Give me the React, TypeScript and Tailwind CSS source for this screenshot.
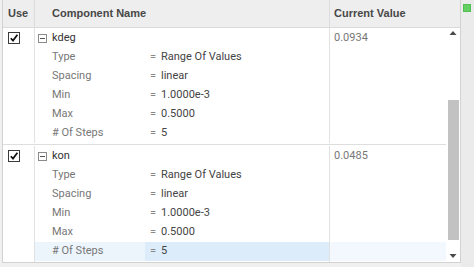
import React from 'react';

interface Param {
  label: string;
  value: string;
}

interface Component {
  id: string;
  name: string;
  current: string;
  params: Param[];
}

const COMPONENTS: Component[] = [
  {
    id: 'kdeg',
    name: 'kdeg',
    current: '0.0934',
    params: [
      { label: 'Type', value: 'Range Of Values' },
      { label: 'Spacing', value: 'linear' },
      { label: 'Min', value: '1.0000e-3' },
      { label: 'Max', value: '0.5000' },
      { label: '# Of Steps', value: '5' },
    ],
  },
  {
    id: 'kon',
    name: 'kon',
    current: '0.0485',
    params: [
      { label: 'Type', value: 'Range Of Values' },
      { label: 'Spacing', value: 'linear' },
      { label: 'Min', value: '1.0000e-3' },
      { label: 'Max', value: '0.5000' },
      { label: '# Of Steps', value: '5' },
    ],
  },
];

function CheckBox() {
  return (
    <span className="w-[12px] h-[12px] border border-[#3a3a3a] bg-white flex items-center justify-center">
      <svg width="10" height="10" viewBox="0 0 10 10">
        <path d="M1.8 5.2 L4 7.6 L8.4 1.8" fill="none" stroke="#111" strokeWidth="1.7" />
      </svg>
    </span>
  );
}

function CollapseIcon() {
  return (
    <span className="w-[9px] h-[9px] border border-[#8a8a8a] bg-white flex items-center justify-center">
      <span className="w-[5px] h-px bg-[#555]" />
    </span>
  );
}

export default function App() {
  return (
    <div className="w-[474px] h-[267px] bg-[#f0f0f0] flex overflow-hidden font-['Roboto',sans-serif] text-[11px]">
      <div className="w-[459px] h-[263px] ml-[2px] border-l border-r border-b border-[#d2d2d2] bg-white flex flex-col">
        {/* header */}
        <div className="h-[28px] shrink-0 flex bg-[#eeeeee] border-b border-[#dadada] font-['Liberation_Sans',sans-serif] font-bold text-[11px] text-[#474747]">
          <div className="w-[32px] border-r border-[#dcdcdc] pl-[5px] flex items-center">Use</div>
          <div className="w-[295px] border-r border-[#dcdcdc] pl-[17px] flex items-center">Component Name</div>
          <div className="flex-1 pl-[4px] flex items-center">Current Value</div>
        </div>

        {/* body */}
        <div className="flex-1 flex min-h-0">
          <div className="w-[443px] flex flex-col">
            {COMPONENTS.map((comp, gi) => (
              <div
                key={comp.id}
                className={gi === 0 ? 'flex flex-col pb-[1px] border-b border-[#dedede]' : 'flex flex-col pt-[1px]'}
              >
                <div className="h-[20px] flex">
                  <div className="w-[32px] border-r border-[#e2e2e2] pl-[5px] flex items-center">
                    <CheckBox />
                  </div>
                  <div className="w-[295px] border-r border-[#e2e2e2] pl-[3px] flex items-center gap-[5px] text-[#333]">
                    <CollapseIcon />
                    <span>{comp.name}</span>
                  </div>
                  <div className="flex-1 pl-[4px] flex items-center text-[#777]">{comp.current}</div>
                </div>
                {comp.params.map((p, pi) => {
                  const selected = gi === 1 && pi === comp.params.length - 1;
                  return (
                    <div key={p.label} className="h-[19px] flex">
                      <div className="w-[32px] border-r border-[#e2e2e2]" />
                      <div
                        className={
                          selected
                            ? 'w-[110px] pl-[17px] flex items-center text-[#777] bg-[#edf5fc]'
                            : 'w-[110px] pl-[17px] flex items-center text-[#777]'
                        }
                      >
                        {p.label}
                      </div>
                      <div
                        className={
                          selected
                            ? 'w-[185px] border-r border-[#e2e2e2] pl-[5px] flex items-center text-[#444] bg-[#dcecfa]'
                            : 'w-[185px] border-r border-[#e2e2e2] pl-[5px] flex items-center text-[#444]'
                        }
                      >
                        <span className="w-[11px] text-[#888]">=</span>
                        <span>{p.value}</span>
                      </div>
                      <div className={selected ? 'flex-1 bg-[#f2f8fe]' : 'flex-1'} />
                    </div>
                  );
                })}
              </div>
            ))}
            <div className="flex-1 flex">
              <div className="w-[32px] border-r border-[#e2e2e2]" />
              <div className="w-[295px] border-r border-[#e2e2e2]" />
            </div>
          </div>

          {/* scrollbar */}
          <div className="w-[14px] flex flex-col items-center bg-white">
            <svg width="8" height="6" viewBox="0 0 8 6" className="mt-[2px]">
              <path d="M0.5 5 L4 1 L7.5 5 Z" fill="#4a4a4a" />
            </svg>
            <div className="w-[11px] h-[140px] mt-[64px] bg-[#c2c2c2]" />
            <div className="flex-1" />
            <svg width="8" height="6" viewBox="0 0 8 6" className="mb-[3px]">
              <path d="M0.5 1 L4 5 L7.5 1 Z" fill="#4a4a4a" />
            </svg>
          </div>
        </div>
      </div>

      {/* right strip */}
      <div className="flex-1 bg-[#ebebeb] pt-[4px] pl-[2px]">
        <div className="w-[8px] h-[8px] bg-[#62d062] border border-[#53c053]" />
      </div>
    </div>
  );
}
